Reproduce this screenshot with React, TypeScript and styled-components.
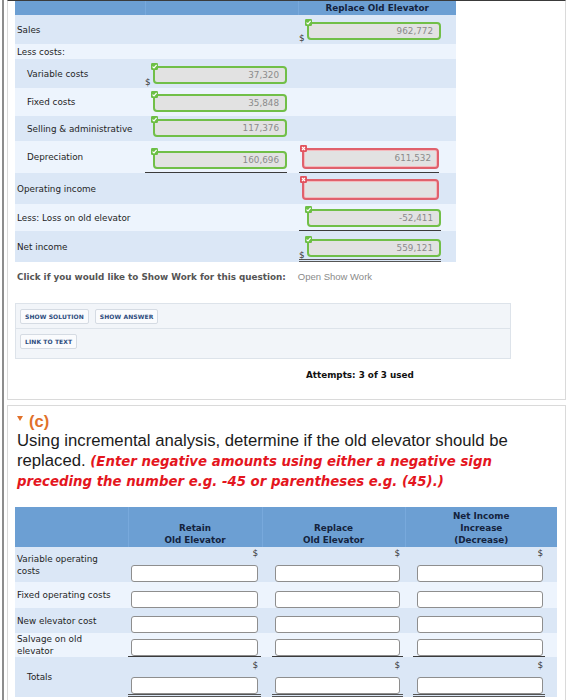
import styled, { createGlobalStyle, css } from 'styled-components';

const GlobalStyle = createGlobalStyle`
  html, body {
    margin: 0;
    padding: 0;
    background: #fff;
  }
  body {
    font-family: "DejaVu Sans", Verdana, sans-serif;
    font-size: 8.8px;
    color: #222;
  }
`;

const Page = styled.div`
  margin-left: 2px;
  border-left: 2px solid #8d8d8d;
  padding-left: 3px;
  min-height: 700px;
`;

const Panel = styled.section<{ $dark?: boolean }>`
  box-sizing: border-box;
  width: 559px;
  border: 1px solid #dadada;
  border-top-color: ${(p) => (p.$dark ? '#3a3a3a' : '#dadada')};
  padding: 0 7px 19px;
  & + & {
    margin-top: 5px;
    padding-top: 5px;
  }
`;

/* ---------- shared table bits ---------- */

const Grid = styled.table<{ $width: number }>`
  width: ${(p) => p.$width}px;
  border-collapse: collapse;
  table-layout: fixed;
  td,
  th {
    padding: 0;
  }
`;

const HeadCell = styled.th<{ $height: number }>`
  height: ${(p) => p.$height}px;
  background: #6c9fd3;
  border-left: 1px solid #78a9dc;
  color: #14233d;
  font-weight: bold;
  font-size: 8.8px;
  line-height: 12px;
  text-align: center;
  vertical-align: bottom;
  padding-bottom: 1px !important;
  &:first-child {
    border-left: none;
  }
`;

const BodyRow = styled.tr<{ $height: number; $shade: boolean }>`
  height: ${(p) => p.$height}px;
  background: ${(p) => (p.$shade ? '#dbe7f6' : '#edf4fd')};
`;

const LabelCell = styled.td<{ $indent?: boolean }>`
  vertical-align: middle;
  padding-left: ${(p) => (p.$indent ? 12 : 2)}px !important;
  padding-right: 10px !important;
  line-height: 12px;
  color: #1f1f1f;
`;

const ValueCell = styled.td<{ $pl?: number }>`
  vertical-align: bottom;
  padding-left: ${(p) => p.$pl ?? 0}px !important;
`;

const ruleStyle = (rule?: 'single' | 'double') =>
  rule === 'single'
    ? css`border-bottom: 1px solid #3b3b3b;`
    : rule === 'double'
    ? css`border-bottom: 3px double #555;`
    : css`border-bottom: 1px solid transparent;`;

/* ---------- part (b) income table ---------- */

const Field = styled.div<{ $rule?: 'single' | 'double'; $pb: number }>`
  display: inline-flex;
  align-items: flex-end;
  padding-bottom: ${(p) => p.$pb}px;
  ${(p) => ruleStyle(p.$rule)}
`;

const Gutter = styled.span`
  width: 8px;
  font-size: 8.8px;
  line-height: 8px;
  color: #333;
  margin-bottom: -2px;
`;

const Amount = styled.div<{ $bad?: boolean }>`
  position: relative;
  box-sizing: border-box;
  width: ${(p) => (p.$bad ? 137 : 134)}px;
  height: ${(p) => (p.$bad ? 21 : 18)}px;
  margin-left: ${(p) => (p.$bad ? -5 : 0)}px;
  border-radius: 4px;
  background: #e2e2e2;
  border: 2px solid ${(p) => (p.$bad ? '#e0616c' : '#71bf48')};
  box-shadow: ${(p) => (p.$bad ? 'inset 0 0 0 1px #f4b9bd' : 'none')};
  color: #8b8b8b;
  font-size: 8.8px;
  line-height: ${(p) => (p.$bad ? 17 : 14)}px;
  text-align: right;
  padding-right: 6px;
`;

const Badge = styled.svg`
  position: absolute;
  left: -4px;
  top: -5px;
  width: 7px;
  height: 7px;
`;

const OkBadge = () => (
  <Badge viewBox="0 0 7 7">
    <rect width="7" height="7" rx="1.2" fill="#6cbf45" />
    <path d="M1.5 3.6 L3 5 L5.6 1.9" stroke="#fff" strokeWidth="1.2" fill="none" />
  </Badge>
);

const BadBadge = () => (
  <Badge viewBox="0 0 7 7">
    <rect width="7" height="7" rx="1.2" fill="#e2545f" />
    <path d="M2 2 L5 5 M5 2 L2 5" stroke="#fff" strokeWidth="1.1" />
  </Badge>
);

type Entry = {
  value: string;
  bad?: boolean;
  dollar?: boolean;
  rule?: 'single' | 'double';
} | null;

type IncomeRow = {
  label: string;
  indent?: boolean;
  height: number;
  c1: Entry;
  c2: Entry;
};

const incomeRows: IncomeRow[] = [
  { label: 'Sales', height: 29, c1: null, c2: { value: '962,772', dollar: true } },
  { label: 'Less costs:', height: 15, c1: null, c2: null },
  { label: 'Variable costs', indent: true, height: 29, c1: { value: '37,320', dollar: true }, c2: null },
  { label: 'Fixed costs', indent: true, height: 28, c1: { value: '35,848' }, c2: null },
  { label: 'Selling & administrative', indent: true, height: 25, c1: { value: '117,376' }, c2: null },
  {
    label: 'Depreciation',
    indent: true,
    height: 32,
    c1: { value: '160,696', rule: 'single' },
    c2: { value: '611,532', bad: true, rule: 'single' },
  },
  { label: 'Operating income', height: 31, c1: null, c2: { value: '', bad: true } },
  { label: 'Less: Loss on old elevator', height: 27, c1: null, c2: { value: '-52,411', rule: 'single' } },
  { label: 'Net income', height: 31, c1: null, c2: { value: '559,121', dollar: true, rule: 'double' } },
];

const EntryField = ({ entry }: { entry: Entry }) => {
  if (!entry) return null;
  return (
    <Field $rule={entry.rule} $pb={entry.rule === 'double' ? 2 : 3}>
      <Gutter>{entry.dollar ? '$' : ''}</Gutter>
      <Amount $bad={entry.bad}>
        {entry.bad ? <BadBadge /> : <OkBadge />}
        {entry.value}
      </Amount>
    </Field>
  );
};

const IncomeTable = () => (
  <Grid $width={441}>
    <colgroup>
      <col style={{ width: 130 }} />
      <col style={{ width: 153 }} />
      <col style={{ width: 158 }} />
    </colgroup>
    <thead>
      <tr>
        <HeadCell $height={13} />
        <HeadCell $height={13} />
        <HeadCell $height={13}>Replace Old Elevator</HeadCell>
      </tr>
    </thead>
    <tbody>
      {incomeRows.map((r, i) => (
        <BodyRow key={r.label} $height={r.height} $shade={i % 2 === 0}>
          <LabelCell $indent={r.indent}>{r.label}</LabelCell>
          <ValueCell>
            <EntryField entry={r.c1} />
          </ValueCell>
          <ValueCell $pl={1}>
            <EntryField entry={r.c2} />
          </ValueCell>
        </BodyRow>
      ))}
    </tbody>
  </Grid>
);

/* ---------- show work / tools ---------- */

const ShowWork = styled.div`
  margin-top: 10px;
  padding-left: 2px;
  display: flex;
  line-height: 10px;
  font-weight: bold;
  color: #555;
`;

const ShowWorkLink = styled.span`
  margin-left: 12px;
  font-family: "Liberation Sans", Arial, sans-serif;
  font-weight: normal;
  font-size: 9.5px;
  color: #8a8a8a;
`;

const ToolBox = styled.div`
  margin-top: 21px;
  width: 496px;
  box-sizing: border-box;
  border: 1px solid #dde3ea;
  background: #f2f5f9;
`;

const ToolRow = styled.div<{ $height: number }>`
  height: ${(p) => p.$height}px;
  display: flex;
  align-items: flex-start;
  gap: 6px;
  padding: 5px 4px 0;
  box-sizing: border-box;
  & + & {
    border-top: 1px solid #dde3ea;
  }
`;

const ToolButton = styled.button`
  height: 15px;
  padding: 0 4px;
  border: 1px solid #d5dbe3;
  border-radius: 2px;
  background: #fafbfd;
  font-family: "DejaVu Sans", Verdana, sans-serif;
  font-weight: bold;
  font-size: 6px;
  color: #2d4b7e;
  letter-spacing: 0.1px;
`;

const Attempts = styled.div`
  margin-top: 11px;
  margin-left: 291px;
  line-height: 10px;
  font-weight: bold;
  color: #111;
`;

/* ---------- part (c) ---------- */

const PartHeading = styled.div`
  display: flex;
  align-items: center;
  gap: 6px;
  padding-left: 2px;
  height: 20px;
  font-family: "Liberation Sans", Arial, sans-serif;
  font-weight: bold;
  font-size: 16.5px;
  color: #e1712b;
`;

const Caret = styled.span`
  width: 0;
  height: 0;
  border-left: 3.5px solid transparent;
  border-right: 3.5px solid transparent;
  border-top: 5px solid #e1712b;
  margin-top: -6px;
`;

const Question = styled.p`
  margin: 0;
  padding-left: 2px;
  font-family: "Liberation Sans", Arial, sans-serif;
  font-size: 16.7px;
  line-height: 20px;
  color: #1b1b1b;
`;

const Hint = styled.em`
  font-family: "DejaVu Sans", Verdana, sans-serif;
  font-weight: bold;
  font-size: 13.3px;
  line-height: 14px;
  color: #e4161e;
`;

const AnalysisWrap = styled.div`
  margin-top: 16px;
`;

const Stack = styled.div<{ $ml: number; $w: number; $pl: number; $rule?: 'single' | 'double' }>`
  margin-left: ${(p) => p.$ml}px;
  width: ${(p) => p.$w}px;
  padding-left: ${(p) => p.$pl}px;
  box-sizing: border-box;
  ${(p) => (p.$rule ? ruleStyle(p.$rule) : '')}
`;

const BoxColumn = styled.div<{ $w: number }>`
  width: ${(p) => p.$w}px;
`;

const DollarLine = styled.div`
  text-align: right;
  line-height: 10px;
  margin-bottom: 7px;
  color: #333;
`;

const Blank = styled.div`
  height: 17px;
  box-sizing: border-box;
  background: #fff;
  border: 1px solid #8e8e8e;
  border-radius: 3px;
`;

const columns = [
  { ml: 0, w: 133, pl: 3, box: 127 },
  { ml: 10, w: 131, pl: 3, box: 125 },
  { ml: 8, w: 132, pl: 4, box: 126 },
];

type AnalysisRow = { label: string; height: number; dollar?: boolean; rule?: 'single' | 'double'; indent?: boolean };

const analysisRows: AnalysisRow[] = [
  { label: 'Variable operating costs', height: 35, dollar: true },
  { label: 'Fixed operating costs', height: 26 },
  { label: 'New elevator cost', height: 25 },
  { label: 'Salvage on old elevator', height: 24, rule: 'single' },
  { label: 'Totals', height: 40, dollar: true, rule: 'double', indent: true },
];

const AnalysisTable = () => (
  <Grid $width={542}>
    <colgroup>
      <col style={{ width: 113 }} />
      <col style={{ width: 134 }} />
      <col style={{ width: 143 }} />
      <col style={{ width: 152 }} />
    </colgroup>
    <thead>
      <tr>
        <HeadCell $height={39} />
        <HeadCell $height={39}>
          Retain
          <br />
          Old Elevator
        </HeadCell>
        <HeadCell $height={39}>
          Replace
          <br />
          Old Elevator
        </HeadCell>
        <HeadCell $height={39}>
          Net Income
          <br />
          Increase
          <br />
          (Decrease)
        </HeadCell>
      </tr>
    </thead>
    <tbody>
      {analysisRows.map((r, i) => (
        <BodyRow key={r.label} $height={r.height} $shade={i % 2 === 0}>
          <LabelCell $indent={r.indent}>{r.label}</LabelCell>
          {columns.map((c, j) => (
            <ValueCell key={j}>
              <Stack $ml={c.ml} $w={c.w} $pl={c.pl} $rule={r.rule}>
                <BoxColumn $w={c.box}>
                  {r.dollar && <DollarLine>$</DollarLine>}
                  <Blank />
                </BoxColumn>
              </Stack>
            </ValueCell>
          ))}
        </BodyRow>
      ))}
    </tbody>
  </Grid>
);

export default function App() {
  return (
    <>
      <GlobalStyle />
      <Page>
        <Panel $dark>
          <IncomeTable />
          <ShowWork>
            Click if you would like to Show Work for this question:
            <ShowWorkLink>Open Show Work</ShowWorkLink>
          </ShowWork>
          <ToolBox>
            <ToolRow $height={24}>
              <ToolButton>SHOW SOLUTION</ToolButton>
              <ToolButton>SHOW ANSWER</ToolButton>
            </ToolRow>
            <ToolRow $height={30}>
              <ToolButton>LINK TO TEXT</ToolButton>
            </ToolRow>
          </ToolBox>
          <Attempts>Attempts: 3 of 3 used</Attempts>
        </Panel>
        <Panel>
          <PartHeading>
            <Caret />
            (c)
          </PartHeading>
          <Question>
            Using incremental analysis, determine if the old elevator should be replaced.{' '}
            <Hint>
              (Enter negative amounts using either a negative sign preceding the number e.g. -45 or
              parentheses e.g. (45).)
            </Hint>
          </Question>
          <AnalysisWrap>
            <AnalysisTable />
          </AnalysisWrap>
        </Panel>
      </Page>
    </>
  );
}
